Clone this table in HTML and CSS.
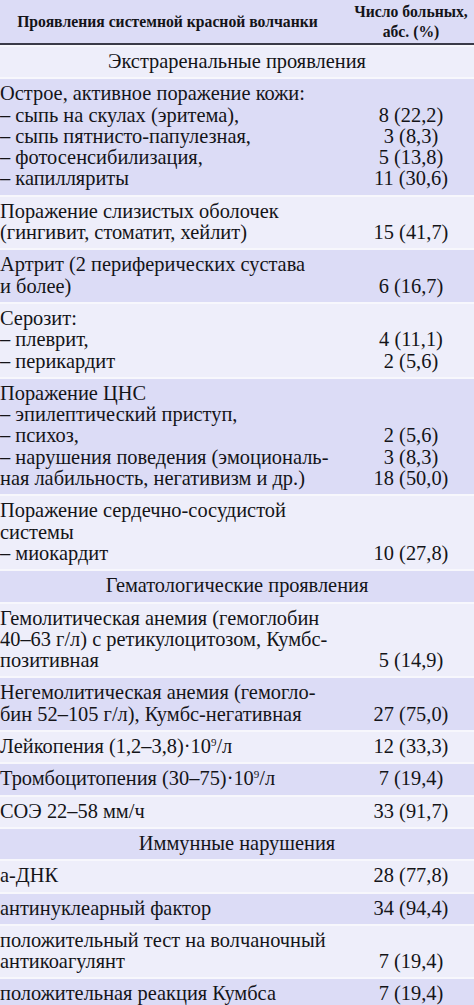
FILE: index.html
```html
<!DOCTYPE html>
<html lang="ru">
<head>
<meta charset="utf-8">
<title>Проявления СКВ</title>
<link rel="stylesheet" href="styles.css">
</head>
<body>
<div class="table">
  <div class="head">
    <div class="head-left">Проявления системной красной волчанки</div>
    <div class="head-right">Число больных,<br>абс. (%)</div>
  </div>
  <div class="section light">Экстраренальные проявления</div>
  <div class="row dark">
    <div class="label">Острое, активное поражение кожи:<br>– сыпь на скулах (эритема),<br>– сыпь пятнисто-папулезная,<br>– фотосенсибилизация,<br>– капилляриты</div>
    <div class="val">8 (22,2)<br>3 (8,3)<br>5 (13,8)<br>11 (30,6)</div>
  </div>
  <div class="row light">
    <div class="label">Поражение слизистых оболочек<br>(гингивит, стоматит, хейлит)</div>
    <div class="val">15 (41,7)</div>
  </div>
  <div class="row dark">
    <div class="label">Артрит (2 периферических сустава<br>и более)</div>
    <div class="val">6 (16,7)</div>
  </div>
  <div class="row light">
    <div class="label">Серозит:<br>– плеврит,<br>– перикардит</div>
    <div class="val">4 (11,1)<br>2 (5,6)</div>
  </div>
  <div class="row dark">
    <div class="label">Поражение ЦНС<br>– эпилептический приступ,<br>– психоз,<br>– нарушения поведения (эмоциональ-<br>ная лабильность, негативизм и др.)</div>
    <div class="val">2 (5,6)<br>3 (8,3)<br>18 (50,0)</div>
  </div>
  <div class="row light">
    <div class="label">Поражение сердечно-сосудистой<br>системы<br>– миокардит</div>
    <div class="val">10 (27,8)</div>
  </div>
  <div class="section dark">Гематологические проявления</div>
  <div class="row light">
    <div class="label">Гемолитическая анемия (гемоглобин<br>40–63 г/л) с ретикулоцитозом, Кумбс-<br>позитивная</div>
    <div class="val">5 (14,9)</div>
  </div>
  <div class="row dark">
    <div class="label">Негемолитическая анемия (гемогло-<br>бин 52–105 г/л), Кумбс-негативная</div>
    <div class="val">27 (75,0)</div>
  </div>
  <div class="row light">
    <div class="label">Лейкопения (1,2–3,8)·10<sup>9</sup>/л</div>
    <div class="val">12 (33,3)</div>
  </div>
  <div class="row dark">
    <div class="label">Тромбоцитопения (30–75)·10<sup>9</sup>/л</div>
    <div class="val">7 (19,4)</div>
  </div>
  <div class="row light">
    <div class="label">СОЭ 22–58 мм/ч</div>
    <div class="val">33 (91,7)</div>
  </div>
  <div class="section dark">Иммунные нарушения</div>
  <div class="row light">
    <div class="label">а-ДНК</div>
    <div class="val">28 (77,8)</div>
  </div>
  <div class="row dark">
    <div class="label">антинуклеарный фактор</div>
    <div class="val">34 (94,4)</div>
  </div>
  <div class="row light">
    <div class="label">положительный тест на волчаночный<br>антикоагулянт</div>
    <div class="val">7 (19,4)</div>
  </div>
  <div class="row dark">
    <div class="label">положительная реакция Кумбса</div>
    <div class="val">7 (19,4)</div>
  </div>
</div>
</body>
</html>
```
FILE: styles.css
```css
html, body {
  margin: 0;
  padding: 0;
  background: #f7f7fc;
}
body {
  font-family: "Liberation Serif", "Times New Roman", serif;
  color: #141418;
  width: 474px;
  overflow: hidden;
}
.table {
  display: flex;
  flex-direction: column;
  gap: 2px;
  background: #f7f7fc;
}
.head {
  display: grid;
  grid-template-columns: 348px 1fr;
  align-items: center;
  background: #dcdcf6;
  height: 43px;
  border-bottom: 2px solid #3a3a48;
  font-weight: bold;
  font-size: 15.7px;
  line-height: 20px;
}
.head-left {
  text-align: center;
  padding-right: 13px;
}
.head-right {
  text-align: center;
  white-space: nowrap;
}
.light { background: #eeeefa; }
.dark { background: #dcdcf6; }
.section {
  text-align: center;
  font-size: 20.4px;
  line-height: 21.3px;
  padding: 4px 0 5px;
}
.row {
  display: grid;
  grid-template-columns: 348px 1fr;
  font-size: 20.4px;
  line-height: 21.3px;
  padding: 4px 0 5px;
}
.label {
  white-space: nowrap;
}
.val {
  align-self: end;
  text-align: center;
  white-space: nowrap;
}
sup {
  font-size: 11px;
  line-height: 0;
  vertical-align: 7px;
}
```
